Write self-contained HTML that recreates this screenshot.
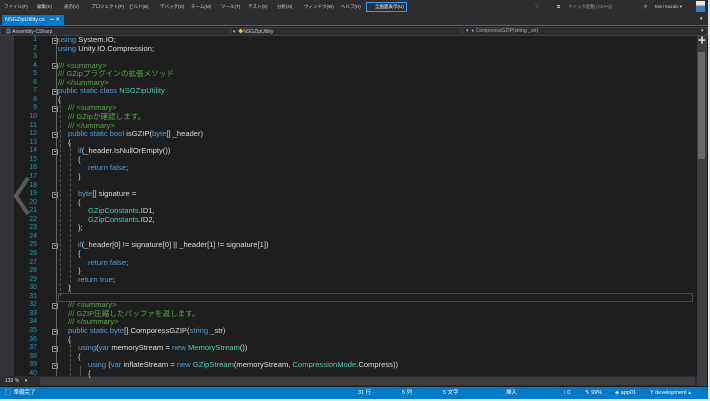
<!DOCTYPE html>
<html><head><meta charset="utf-8"><style>
*{margin:0;padding:0;box-sizing:border-box}
body{width:710px;height:401px;overflow:hidden;background:#1e1e1e;font-family:"Liberation Sans","Noto Sans CJK JP",sans-serif;position:relative;color:#dcdcdc}
.abs{position:absolute}
.menu{left:0;top:0;width:710px;height:13px;background:#2d2d30;font-size:4.5px;color:#d0d0d0;white-space:nowrap}
.menu span{position:absolute;top:3.5px;line-height:6px}
.tabs{left:0;top:13px;width:710px;height:13px;background:#2d2d30;border-bottom:1.5px solid #007acc}
.tab{left:2px;top:15px;width:62px;height:11px;background:#007acc;color:#fff;font-size:5.5px;padding:2px 0 0 3px;white-space:nowrap}
.nav{left:0;top:27px;width:710px;height:9px;background:#2d2d30;font-size:5px;color:#c8c8c8;white-space:nowrap}
.code{left:0;top:36px;width:697px;height:340px;background:#1e1e1e}
.lstrip{left:0;top:36px;width:14px;height:340px;background:#333337}
.ln{position:absolute;left:14px;width:23px;text-align:right;color:#2b91af;font-size:7px;line-height:8.56px;height:8.56px}
.l{position:absolute;white-space:pre;font-size:7.6px;color:#dcdcdc;line-height:8.56px;height:8.56px;overflow:visible}
.k{color:#569cd6}.t{color:#4ec9b0}.c{color:#57a64a}
.fold{position:absolute;left:52px;width:6px;height:6px;border:1px solid #888;}
.fold:after{content:"";position:absolute;left:1px;top:1.5px;width:2px;height:1px;background:#aaa}
.status{left:0;top:387px;width:710px;height:12px;background:#007acc;color:#fff;font-size:5.5px;white-space:nowrap}
.status span{position:absolute;top:3px;line-height:7px}
</style></head><body>
<div class="abs menu">
<span style="left:4px">ファイル(F)</span><span style="left:37px">編集(E)</span><span style="left:64px">表示(V)</span><span style="left:91px">プロジェクト(P)</span><span style="left:129px">ビルド(B)</span><span style="left:160px">デバッグ(D)</span><span style="left:191px">チーム(M)</span><span style="left:221px">ツール(T)</span><span style="left:248px">テスト(S)</span><span style="left:277px">分析(N)</span><span style="left:304px">ウィンドウ(W)</span><span style="left:341px">ヘルプ(H)</span>
<span style="left:366px;top:1.5px;border:1px solid #3399ff;padding:1px 2px 1px 8px;color:#fff">全画面表示(U)</span>
<span style="left:535px;color:#999">▽</span><span style="left:557px">⧉</span><span style="left:568px;color:#999">クイック起動 (Ctrl+Q)</span>
<span style="left:644px">⚲</span><span style="left:655px">Mori Kazuki ▾</span>
<div class="abs" style="left:696px;top:1px;width:9px;height:11px;background:linear-gradient(#e7e7e7 40%,#3c7fc9 40%)"></div>
</div>
<div class="abs tabs"></div>
<div class="abs tab">NSGZipUtility.cs &nbsp;&nbsp;⊸ ✕</div>
<div class="abs" style="left:700px;top:16px;color:#ddd;font-size:5px">▾</div>
<div class="abs nav">
<div class="abs" style="left:0;top:0;width:230px;height:9px;border:1px solid #3f3f46"></div>
<div class="abs" style="left:231px;top:0;width:230px;height:9px;border:1px solid #3f3f46"></div>
<div class="abs" style="left:462px;top:0;width:246px;height:9px;border:1px solid #3f3f46"></div>
<span class="abs" style="left:6px;top:1px">▦ Assembly-CSharp</span>
<span class="abs" style="left:233px;top:1px">▾ &nbsp;<span style="color:#e8b95c">◆</span>NSGZipUtility</span>
<span class="abs" style="left:466px;top:1px;color:#aaa">▾ &nbsp;<span style="color:#b180d7">●</span> ComporessGZIP(string _str)</span>
<span class="abs" style="left:701px;top:1px">▾</span>
</div>
<div class="abs code"></div>
<div class="abs lstrip"></div>
<svg class="abs" style="left:12px;top:176px" width="20" height="40"><polyline points="16,2 4,20 16,38" fill="none" stroke="#5a5a5a" stroke-width="4"/></svg>
<div class="abs" style="left:58px;top:293px;width:635px;height:9px;border:1px solid #464646"></div>
<div class="abs" style="left:697px;top:36px;width:10px;height:350px;background:#3e3e42"></div>
<div class="abs" style="left:698px;top:37px;width:8px;height:8px;color:#ccc;font-size:8px;line-height:8px;text-align:center">✚</div>
<div class="abs" style="left:698px;top:52px;width:7px;height:107px;background:#686868"></div>
<div class="abs" style="left:0;top:376px;width:697px;height:10px;background:#2d2d30;font-size:5px;color:#ddd"><span class="abs" style="left:5px;top:2px">133 %&nbsp;&nbsp;&nbsp;&nbsp;▾</span><div class="abs" style="left:40px;top:1px;width:655px;height:8px;background:#3e3e42"></div></div>
<div class="abs status">
<span style="left:5px">▢&nbsp; 準備完了</span><span style="left:358px">31 行</span><span style="left:402px">5 列</span><span style="left:443px">5 文字</span><span style="left:506px">挿入</span><span style="left:563px">↑ 0</span><span style="left:585px">✎ 99%</span><span style="left:615px">◈ app01</span><span style="left:650px">Y development ▴</span>
</div>
<div class="abs" style="left:0;top:399px;width:710px;height:2px;background:#e8e8e8"></div>
<div class="abs" style="left:708px;top:0;width:2px;height:401px;background:#e8e8e8"></div>
<div id="g"></div>
<div class="abs" style="left:60px;top:100px;height:196px;border-left:1px dashed #555"></div>
<div class="abs" style="left:70px;top:143px;height:150px;border-left:1px dashed #555"></div>
<div class="abs" style="left:70px;top:340px;height:36px;border-left:1px dashed #555"></div>
<div class="abs" style="left:80px;top:366px;height:10px;border-left:1px dashed #555"></div>
<div class="abs" style="left:56px;top:36px;height:340px;border-left:1px solid #666"></div>
<script>
var L=[
'<span class="k">using</span> System.IO;',
'<span class="k">using</span> Unity.IO.Compression;',
'',
'<span class="c">/// &lt;summary&gt;</span>',
'<span class="c">/// GZipプラグインの拡張メソッド</span>',
'<span class="c">/// &lt;/summary&gt;</span>',
'<span class="k">public static class</span> <span class="t">NSGZipUtility</span>',
'{',
'   <span class="c">/// &lt;summary&gt;</span>',
'   <span class="c">/// GZipか確認します。</span>',
'   <span class="c">/// &lt;/ummary&gt;</span>',
'   <span class="k">public static bool</span> isGZIP(<span class="k">byte</span>[] _header)',
'   {',
'      <span class="k">if</span>(_header.IsNullOrEmpty())',
'      {',
'         <span class="k">return false</span>;',
'      }',
'',
'      <span class="k">byte</span>[] signature =',
'      {',
'         <span class="t">GZipConstants</span>.ID1,',
'         <span class="t">GZipConstants</span>.ID2,',
'      };',
'',
'      <span class="k">if</span>(_header[0] != signature[0] || _header[1] != signature[1])',
'      {',
'         <span class="k">return false</span>;',
'      }',
'      <span class="k">return true</span>;',
'   }',
'',
'   <span class="c">/// &lt;summary&gt;</span>',
'   <span class="c">/// GZIP圧縮したバッファを返します。</span>',
'   <span class="c">/// &lt;/summary&gt;</span>',
'   <span class="k">public static byte</span>[] ComporessGZIP(<span class="k">string</span> _str)',
'   {',
'      <span class="k">using</span>(<span class="k">var</span> memoryStream = <span class="k">new</span> <span class="t">MemoryStream</span>())',
'      {',
'         <span class="k">using</span> (<span class="k">var</span> inflateStream = <span class="k">new</span> <span class="t">GZipStream</span>(memoryStream, <span class="t">CompressionMode</span>.Compress))',
'         {'
];
var folds=[1,4,7,9,12,14,19,25,32,35,37,39];
var h='';
for(var i=0;i<40;i++){
 var y=36+i*8.56;
 h+='<div class="ln" style="top:'+y+'px">'+(i+1)+'</div>';
 var s=L[i],ind=0;while(s[ind]==' ')ind++;
 h+='<div class="l" style="left:'+(58+ind*3.33)+'px;top:'+y+'px">'+s.slice(ind)+'</div>';
 if(folds.indexOf(i+1)>=0)h+='<div class="fold" style="top:'+(y+1.5)+'px;background:#1e1e1e"></div>';
}
document.getElementById('g').innerHTML=h;
</script>
</body></html>
